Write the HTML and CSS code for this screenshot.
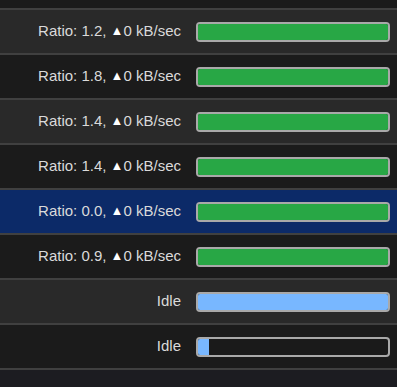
FILE: index.html
```html
<!DOCTYPE html>
<html>

<head>
	<meta charset="utf-8" />
	<title>Torrents</title>
	<link rel="stylesheet" href="styles.css">
</head>

<body>
	<div class="torrent-list">
		<div class="torrent stub"></div>
		<div class="torrent">
			<div class="status">Ratio: 1.2, <span class="up">▲</span>0 kB/sec</div>
			<div class="progress"><div class="fill seed" style="width: 100%"></div></div>
		</div>
		<div class="torrent">
			<div class="status">Ratio: 1.8, <span class="up">▲</span>0 kB/sec</div>
			<div class="progress"><div class="fill seed" style="width: 100%"></div></div>
		</div>
		<div class="torrent">
			<div class="status">Ratio: 1.4, <span class="up">▲</span>0 kB/sec</div>
			<div class="progress"><div class="fill seed" style="width: 100%"></div></div>
		</div>
		<div class="torrent">
			<div class="status">Ratio: 1.4, <span class="up">▲</span>0 kB/sec</div>
			<div class="progress"><div class="fill seed" style="width: 100%"></div></div>
		</div>
		<div class="torrent selected">
			<div class="status">Ratio: 0.0, <span class="up">▲</span>0 kB/sec</div>
			<div class="progress"><div class="fill seed" style="width: 100%"></div></div>
		</div>
		<div class="torrent">
			<div class="status">Ratio: 0.9, <span class="up">▲</span>0 kB/sec</div>
			<div class="progress"><div class="fill seed" style="width: 100%"></div></div>
		</div>
		<div class="torrent">
			<div class="status">Idle</div>
			<div class="progress"><div class="fill idle" style="width: 100%"></div></div>
		</div>
		<div class="torrent">
			<div class="status">Idle</div>
			<div class="progress"><div class="fill idle" style="width: 6%"></div></div>
		</div>
	</div>
</body>

</html>
```

FILE: styles.css
```css
body {
	margin: 0;
	background-color: #1c1c21;
	font: normal 15px "Liberation Sans", Arial, sans-serif;
	color: #dadada;
}

.torrent-list {
	border-bottom: 2px solid #404040;
}

.torrent {
	display: flex;
	align-items: center;
	height: 43px;
	border-top: 2px solid #404040;
	background-color: #1b1b1b;
}

.torrent:nth-child(even) {
	background-color: #292929;
}

.torrent.stub {
	height: 8px;
	border-top: none;
}

.torrent.selected {
	background-color: #0c2a68;
}

.status {
	flex: 1;
	text-align: right;
	padding-right: 15px;
	white-space: nowrap;
	margin-top: -2px;
}

.up {
	font-size: 13px;
	color: #fff;
	position: relative;
	top: -1px;
}

.progress {
	width: 190px;
	height: 16px;
	margin-right: 7px;
	border: 2px solid #a9a9a9;
	border-radius: 4px;
	background-color: #1a1a1a;
	overflow: hidden;
}

.fill {
	height: 100%;
}

.seed {
	background-color: #28a745;
}

.idle {
	background-color: #78b7ff;
}
```
